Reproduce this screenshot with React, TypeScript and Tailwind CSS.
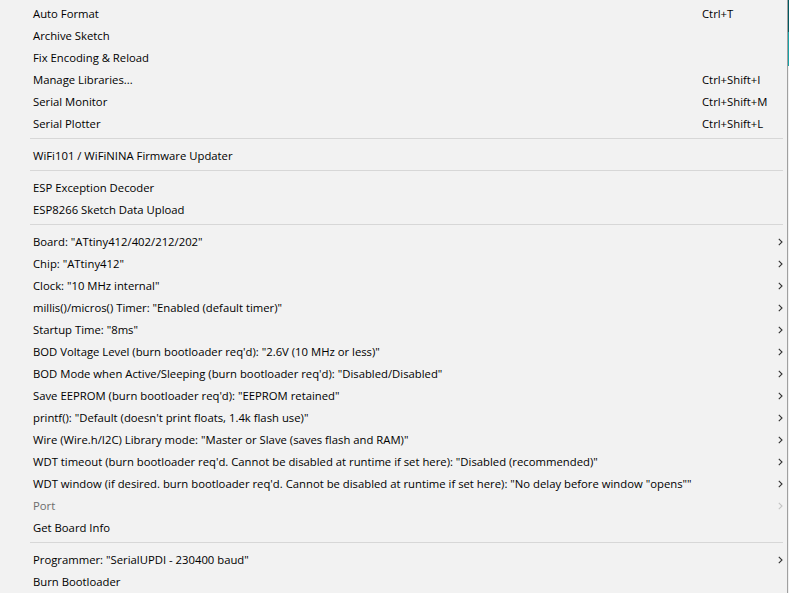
import React from 'react';

type Item =
  | { kind: 'sep' }
  | { kind: 'item'; label: string; shortcut?: string; sub?: boolean; disabled?: boolean };

const items: Item[] = [
  { kind: 'item', label: 'Auto Format', shortcut: 'Ctrl+T' },
  { kind: 'item', label: 'Archive Sketch' },
  { kind: 'item', label: 'Fix Encoding & Reload' },
  { kind: 'item', label: 'Manage Libraries...', shortcut: 'Ctrl+Shift+I' },
  { kind: 'item', label: 'Serial Monitor', shortcut: 'Ctrl+Shift+M' },
  { kind: 'item', label: 'Serial Plotter', shortcut: 'Ctrl+Shift+L' },
  { kind: 'sep' },
  { kind: 'item', label: 'WiFi101 / WiFiNINA Firmware Updater' },
  { kind: 'sep' },
  { kind: 'item', label: 'ESP Exception Decoder' },
  { kind: 'item', label: 'ESP8266 Sketch Data Upload' },
  { kind: 'sep' },
  { kind: 'item', label: 'Board: "ATtiny412/402/212/202"', sub: true },
  { kind: 'item', label: 'Chip: "ATtiny412"', sub: true },
  { kind: 'item', label: 'Clock: "10 MHz internal"', sub: true },
  { kind: 'item', label: 'millis()/micros() Timer: "Enabled (default timer)"', sub: true },
  { kind: 'item', label: 'Startup Time: "8ms"', sub: true },
  { kind: 'item', label: 'BOD Voltage Level (burn bootloader req\'d): "2.6V (10 MHz or less)"', sub: true },
  { kind: 'item', label: 'BOD Mode when Active/Sleeping (burn bootloader req\'d): "Disabled/Disabled"', sub: true },
  { kind: 'item', label: 'Save EEPROM (burn bootloader req\'d): "EEPROM retained"', sub: true },
  { kind: 'item', label: 'printf(): "Default (doesn\'t print floats, 1.4k flash use)"', sub: true },
  { kind: 'item', label: 'Wire (Wire.h/I2C) Library mode: "Master or Slave (saves flash and RAM)"', sub: true },
  { kind: 'item', label: 'WDT timeout (burn bootloader req\'d. Cannot be disabled at runtime if set here): "Disabled (recommended)"', sub: true },
  { kind: 'item', label: 'WDT window (if desired. burn bootloader req\'d. Cannot be disabled at runtime if set here): "No delay before window "opens""', sub: true },
  { kind: 'item', label: 'Port', sub: true, disabled: true },
  { kind: 'item', label: 'Get Board Info' },
  { kind: 'sep' },
  { kind: 'item', label: 'Programmer: "SerialUPDI - 230400 baud"', sub: true },
  { kind: 'item', label: 'Burn Bootloader' },
];

const Chevron: React.FC<{ disabled?: boolean }> = ({ disabled }) => (
  <svg width="5" height="8" viewBox="0 0 5 8" className={disabled ? 'text-[#c4c4c4]' : 'text-[#333]'}>
    <path d="M0.8 0.8 L4 4 L0.8 7.2" fill="none" stroke="currentColor" strokeWidth="1.1" />
  </svg>
);

const App: React.FC = () => {
  return (
    <div className="flex w-[789px] h-[593px] overflow-hidden bg-[#f2f2f2]" style={{ fontFamily: '"Open Sans", "Noto Sans", sans-serif' }}>
      <div className="w-[788px] border-r border-[#a0a0a0] pt-[3px]">
        {items.map((it, i) =>
          it.kind === 'sep' ? (
            <div key={i} className="h-[10px] pt-[3px] pl-[30px] pr-[4px]">
              <div className="h-px bg-[#d7d7d7]" />
            </div>
          ) : (
            <div key={i} className="h-[22px] flex items-center text-[11.3px] leading-none antialiased">
              <span className={`pl-[33px] flex-1 whitespace-nowrap ${it.disabled ? 'text-[#6d6d6d]' : 'text-black'}`}>
                {it.label}
              </span>
              <span className="w-[76px] whitespace-nowrap text-black">{it.shortcut ?? ''}</span>
              <span className="w-[9px] flex items-center">{it.sub && <Chevron disabled={it.disabled} />}</span>
            </div>
          )
        )}
      </div>
      <div className="w-px flex flex-col">
        <div className="h-[32px] bg-[#00585f]" />
        <div className="h-[34px] bg-[#17a1a5]" />
        <div className="flex-1 bg-[#f0f0f0]" />
      </div>
    </div>
  );
};

export default App;
